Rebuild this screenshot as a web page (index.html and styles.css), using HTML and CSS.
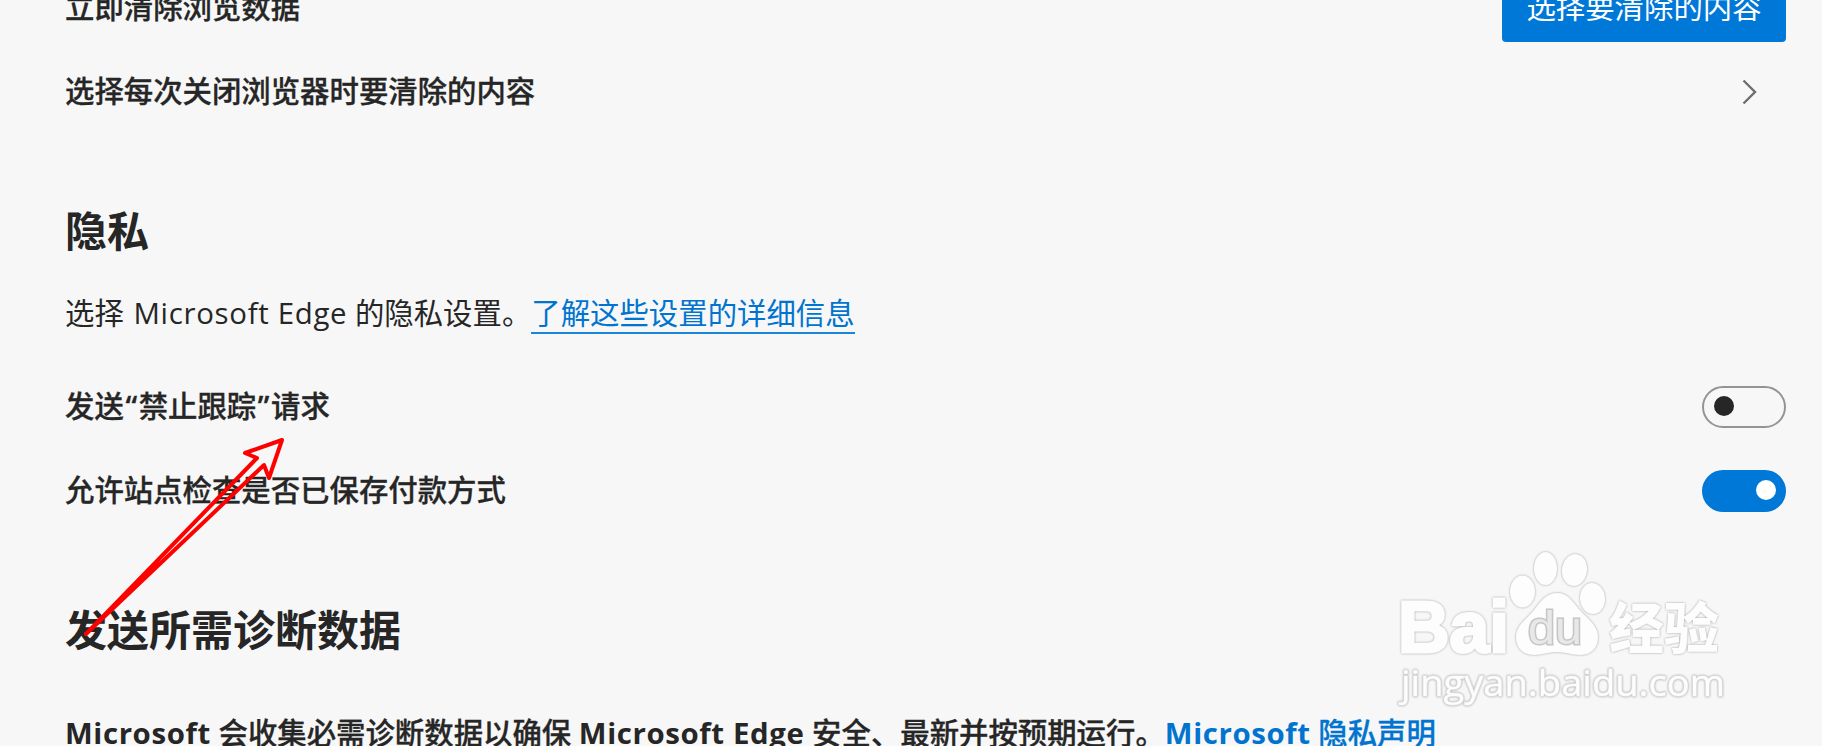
FILE: index.html
```
<!DOCTYPE html>
<html lang="zh-CN">
<head>
    <meta charset="UTF-8">
    <meta name="viewport" content="width=device-width, initial-scale=1.0">
    <title>隐私设置</title>
    <link rel="stylesheet" href="styles.css">
</head>
<body>
    <main class="settings">
        <!-- 清除浏览数据 -->
        <section class="section">
            <div class="row">
                <span class="label">立即清除浏览数据</span>
                <button class="btn">选择要清除的内容</button>
            </div>
            <div class="row">
                <span class="label">选择每次关闭浏览器时要清除的内容</span>
                <svg class="chevron" viewBox="0 0 16 26"><path d="M1.5 1.5L13 13L1.5 24.5"/></svg>
            </div>
        </section>

        <!-- 隐私 -->
        <section class="section">
            <h2>隐私</h2>
            <p class="desc">选择 <span class="latin">Microsoft Edge</span> 的隐私设置。<a class="link" href="#">了解这些设置的详细信息</a></p>
            <div class="row">
                <span class="label">发送<span class="quote">“</span>禁止跟踪<span class="quote">”</span>请求</span>
                <span class="toggle"></span>
            </div>
            <div class="row">
                <span class="label">允许站点检查是否已保存付款方式</span>
                <span class="toggle on"></span>
            </div>
        </section>

        <!-- 诊断数据 -->
        <section class="section">
            <h2>发送所需诊断数据</h2>
            <p class="notice"><b>Microsoft</b> 会收集必需诊断数据以确保 <b>Microsoft Edge</b> 安全、最新并按预期运行。<a href="#"><b>Microsoft</b> 隐私声明</a></p>
        </section>
    </main>

    <svg class="arrow" viewBox="0 0 210 210">
        <path d="M6 204L177 28L165 23L202 10L189 48L184 35Z"/>
    </svg>

    <svg class="watermark" viewBox="0 0 340 170">
        <g class="paw">
            <ellipse cx="132.5" cy="51.5" rx="12.5" ry="16"/>
            <ellipse cx="155.5" cy="28.5" rx="11.5" ry="16.5"/>
            <ellipse cx="184.5" cy="30" rx="12.5" ry="16" transform="rotate(8 184.5 30)"/>
            <ellipse cx="202.5" cy="58.5" rx="12.5" ry="15.5" transform="rotate(-5 202.5 58.5)"/>
            <path d="M167 53C178 53 182 61 188 68C195 77 208 84 208 97C208 109 200 115 190 115C181 115 176 112 167 112C158 112 153 115 144 115C133 115 126 108 126 97C126 85 137 79 144 70C151 61 156 53 167 53Z"/>
        </g>
        <text class="bai" x="8" y="111.5" textLength="111" lengthAdjust="spacingAndGlyphs">Bai</text>
        <text class="du" x="138" y="104" textLength="54" lengthAdjust="spacingAndGlyphs">du</text>
        <text class="jingyan" x="219" y="108" textLength="110" lengthAdjust="spacingAndGlyphs">经验</text>
        <text class="site" x="11" y="156" textLength="324" lengthAdjust="spacingAndGlyphs">jingyan.baidu.com</text>
    </svg>
</body>
</html>
```

FILE: styles.css
```
* {
    margin: 0;
    padding: 0;
    box-sizing: border-box;
}

html {
    overflow: hidden;
}

body {
    position: relative;
    height: 746px;
    overflow: hidden;
    background: #f7f7f7;
    color: #262626;
    font-family: 'Open Sans', 'Noto Sans CJK SC', sans-serif;
    font-size: 29.4px;
}

.settings {
    margin-top: -34px;
    padding: 0 36px 0 65px;
}

.section {
    margin-bottom: 68px;
}

.section:last-child {
    margin-bottom: 0;
}

.row {
    display: flex;
    align-items: center;
    justify-content: space-between;
    height: 84px;
}

.label {
    padding-bottom: 5px;
    font-weight: 500;
    -webkit-text-stroke: 0.3px;
    white-space: nowrap;
}

.quote {
    padding: 0 1.6px;
    font-weight: 600;
}

.btn {
    width: 284px;
    height: 68px;
    padding-bottom: 5px;
    border: none;
    border-radius: 4px;
    background: #0078d7;
    color: #fff;
    font-family: inherit;
    font-size: inherit;
    white-space: nowrap;
}

.chevron {
    width: 16px;
    height: 26px;
    margin-right: 28px;
    fill: none;
    stroke: #6e6e6e;
    stroke-width: 2.4;
}

h2 {
    height: 60px;
    line-height: 58px;
    font-size: 42px;
    font-weight: 700;
}

.desc {
    height: 103px;
    padding-top: 31px;
    line-height: 40px;
    white-space: nowrap;
}

.latin {
    margin-left: 2px;
    letter-spacing: 0.7px;
}

.notice {
    height: 93px;
    padding-top: 52px;
    line-height: 40px;
    font-weight: 500;
    -webkit-text-stroke: 0.3px;
    white-space: nowrap;
}

.notice b {
    font-weight: 700;
    letter-spacing: 0.62px;
    -webkit-text-stroke: 0;
}

a {
    color: #0074cf;
    text-decoration: none;
}

.link {
    display: inline-block;
    height: 41px;
    border-bottom: 2px solid #1a86d9;
}

.toggle {
    display: flex;
    align-items: center;
    width: 84px;
    height: 42px;
    padding: 0 10px 2px;
    border: 2px solid #949494;
    border-radius: 21px;
}

.toggle::before {
    content: '';
    width: 20px;
    height: 20px;
    border-radius: 50%;
    background: #262626;
}

.toggle.on {
    justify-content: flex-end;
    padding-right: 8px;
    border-color: #0078d7;
    background: #0078d7;
}

.toggle.on::before {
    background: #fff;
}

/* 标注箭头 */
.arrow {
    position: absolute;
    left: 80px;
    top: 430px;
    width: 210px;
    height: 210px;
    fill: none;
    stroke: #f00;
    stroke-width: 4;
    stroke-linejoin: round;
}

/* 水印 */
.watermark {
    position: absolute;
    left: 1390px;
    top: 540px;
    width: 340px;
    height: 170px;
    fill: #fdfdfd;
    filter: drop-shadow(0 0 1.2px #a0a0a0);
}

.bai {
    font: 700 72px 'Liberation Sans', sans-serif;
    stroke: #fdfdfd;
    stroke-width: 3;
}

.du {
    font: 400 46px 'Liberation Sans', sans-serif;
    fill: #e8e8e8;
    stroke: #c6c6c6;
    stroke-width: 3;
    paint-order: stroke;
}

.jingyan {
    font: 900 55px 'Noto Sans CJK SC', sans-serif;
}

.site {
    font: 400 37px 'Open Sans', sans-serif;
    stroke: #e2e2e2;
    stroke-width: 1.5;
    paint-order: stroke;
}
```
